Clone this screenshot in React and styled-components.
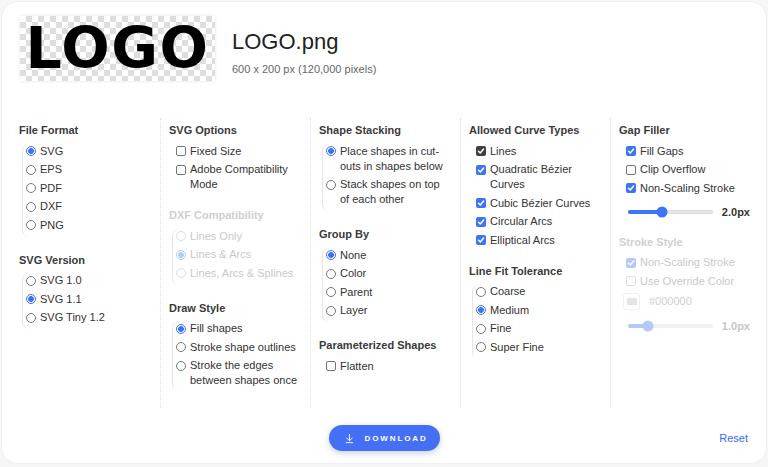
import React from 'react';
import styled, { createGlobalStyle, css } from 'styled-components';
import { ArrowDownToLine } from 'lucide-react';

const blue = '#3d74f6';
const paleBlue = '#b3cafb';

const GlobalStyle = createGlobalStyle`
  body {
    margin: 0;
    background: #f6f6f6;
    font-family: "Liberation Sans", Arial, sans-serif;
    color: #333;
  }
`;

const Card = styled.div`
  box-sizing: border-box;
  margin: 2px;
  width: 764px;
  height: 461px;
  padding: 14px 18px 12px 18px;
  background: #fff;
  border-radius: 16px;
  box-shadow: 0 0 0 1px #f0f0f0;
  display: flex;
  flex-direction: column;
`;

const Header = styled.header`
  display: flex;
  align-items: flex-start;
  gap: 17px;
`;

const Preview = styled.div`
  width: 195px;
  height: 65px;
  display: flex;
  align-items: center;
  justify-content: center;
  background: repeating-conic-gradient(#dedede 0 25%, #fff 0 50%) 0 0 / 12px 12px;
  box-shadow: 0 0 3px rgba(0, 0, 0, 0.12);
`;

const LogoText = styled.span`
  font-family: "DejaVu Sans", sans-serif;
  font-weight: 700;
  font-size: 57px;
  line-height: 1;
  color: #000;
  letter-spacing: 1.5px;
`;

const FileInfo = styled.div`
  padding-top: 13px;
`;

const FileName = styled.h1`
  margin: 0;
  font-size: 22px;
  font-weight: 400;
  line-height: 26px;
  color: #222;
`;

const FileMeta = styled.div`
  margin-top: 8px;
  font-size: 11px;
  color: #666;
`;

const Columns = styled.div`
  display: grid;
  grid-template-columns: repeat(5, 150px);
  margin: 37px 0 0 -10px;
  height: 274px;
`;

const Column = styled.div`
  box-sizing: border-box;
  padding: 5px 10px 0 9px;

  & + & {
    border-left: 1px dotted #dedede;
    padding-left: 8px;
  }
`;

const Section = styled.section`
  margin-bottom: 16px;
`;

const Heading = styled.h3`
  margin: 0 0 6.5px;
  font-size: 11px;
  line-height: 14px;
  font-weight: 700;
  color: ${({ $disabled }) => ($disabled ? '#cfcfcf' : '#3a3a3a')};
`;

const Group = styled.div`
  display: flex;
  flex-direction: column;
  gap: 3.5px;
  margin-left: 3px;
  padding-left: 3px;
  border-left: 1px solid transparent;

  ${({ $boxed }) =>
    $boxed &&
    css`
      border-left-color: #e6e6e6;
      border-radius: 7px;
      padding-bottom: 4px;
    `}
`;

const OptionRow = styled.label`
  display: flex;
  align-items: flex-start;
  gap: 4px;
  font-size: 11px;
  line-height: 15px;
  color: ${({ $disabled }) => ($disabled ? '#c9c9c9' : '#333')};
`;

const Control = styled.span`
  box-sizing: border-box;
  flex: none;
  width: 10px;
  height: 10px;
  margin-top: 2.5px;
  display: flex;
  align-items: center;
  justify-content: center;
  background: #fff;
  border: 1px solid ${({ $disabled }) => ($disabled ? '#dedede' : '#777')};
  border-radius: ${({ $type }) => ($type === 'radio' ? '50%' : '2px')};

  ${({ $type, $checked, $disabled }) =>
    $type === 'radio' &&
    $checked &&
    css`
      border-color: ${$disabled ? paleBlue : blue};
      background: radial-gradient(circle, ${$disabled ? paleBlue : blue} 0 2.6px, #fff 3.2px);
    `}

  ${({ $type, $checked, $disabled, $dark }) =>
    $type === 'checkbox' &&
    $checked &&
    css`
      border-color: transparent;
      background: ${$disabled ? paleBlue : $dark ? '#3f3f3f' : blue};
    `}
`;

const Tick = () => (
  <svg width="8" height="8" viewBox="0 0 8 8">
    <path d="M1.5 4.2 L3.3 6 L6.6 2" fill="none" stroke="#fff" strokeWidth="1.5" strokeLinecap="round" strokeLinejoin="round" />
  </svg>
);

const Option = ({ type = 'radio', checked, disabled, dark, children }) => (
  <OptionRow $disabled={disabled}>
    <Control $type={type} $checked={checked} $disabled={disabled} $dark={dark}>
      {type === 'checkbox' && checked && <Tick />}
    </Control>
    <span>{children}</span>
  </OptionRow>
);

const SliderRow = styled.div`
  display: flex;
  align-items: center;
  gap: 9px;
  margin: 9px 0 0 9px;
  height: 14px;
`;

const Track = styled.div`
  position: relative;
  width: 85px;
  height: 4px;
  border-radius: 2px;
  background: ${({ $disabled }) => ($disabled ? '#f1f1f1' : '#e6e6e6')};
  box-shadow: inset 0 0 0 1px ${({ $disabled }) => ($disabled ? '#f0f0f0' : '#dcdcdc')};
`;

const Fill = styled.div`
  height: 100%;
  border-radius: 2px;
  background: ${({ $disabled }) => ($disabled ? paleBlue : blue)};
`;

const Thumb = styled.div`
  position: absolute;
  top: 50%;
  width: 11px;
  height: 11px;
  border-radius: 50%;
  transform: translate(-50%, -50%);
  background: ${({ $disabled }) => ($disabled ? paleBlue : blue)};
`;

const SliderValue = styled.span`
  font-size: 11px;
  font-weight: 700;
  color: ${({ $disabled }) => ($disabled ? '#c6c6c6' : '#333')};
`;

const Slider = ({ value, label, disabled }) => (
  <SliderRow>
    <Track $disabled={disabled}>
      <Fill $disabled={disabled} style={{ width: `${value}%` }} />
      <Thumb $disabled={disabled} style={{ left: `${value}%` }} />
    </Track>
    <SliderValue $disabled={disabled}>{label}</SliderValue>
  </SliderRow>
);

const ColorRow = styled.div`
  display: flex;
  align-items: center;
  gap: 9px;
  margin: 4px 0 0 4px;
`;

const Swatch = styled.span`
  box-sizing: border-box;
  width: 17px;
  height: 17px;
  display: flex;
  align-items: center;
  justify-content: center;
  border: 1px solid #f0f0f0;
  border-radius: 3px;

  &::after {
    content: '';
    width: 10px;
    height: 7px;
    border-radius: 1px;
    background: #e4e4e4;
  }
`;

const HexValue = styled.span`
  font-size: 11px;
  color: #cfcfcf;
`;

const Footer = styled.footer`
  margin-top: 33px;
  display: grid;
  grid-template-columns: 1fr auto 1fr;
  align-items: center;
`;

const DownloadButton = styled.button`
  grid-column: 2;
  display: flex;
  align-items: center;
  gap: 10px;
  height: 26px;
  width: 111px;
  padding: 0 0 0 15px;
  border: none;
  border-radius: 13px;
  background: #4570f6;
  color: #fff;
  font-family: "Liberation Sans", Arial, sans-serif;
  font-size: 8px;
  font-weight: 700;
  letter-spacing: 1.9px;
  box-shadow: 0 2px 6px rgba(40, 60, 120, 0.25);
`;

const ResetLink = styled.a`
  justify-self: end;
  font-size: 11px;
  color: #3a6cf0;
`;

export default function App() {
  return (
    <>
      <GlobalStyle />
      <Card>
        <Header>
          <Preview>
            <LogoText>LOGO</LogoText>
          </Preview>
          <FileInfo>
            <FileName>LOGO.png</FileName>
            <FileMeta>600 x 200 px (120,000 pixels)</FileMeta>
          </FileInfo>
        </Header>

        <Columns>
          <Column>
            <Section>
              <Heading>File Format</Heading>
              <Group $boxed>
                <Option checked>SVG</Option>
                <Option>EPS</Option>
                <Option>PDF</Option>
                <Option>DXF</Option>
                <Option>PNG</Option>
              </Group>
            </Section>
            <Section>
              <Heading>SVG Version</Heading>
              <Group $boxed>
                <Option>SVG 1.0</Option>
                <Option checked>SVG 1.1</Option>
                <Option>SVG Tiny 1.2</Option>
              </Group>
            </Section>
          </Column>

          <Column>
            <Section>
              <Heading>SVG Options</Heading>
              <Group>
                <Option type="checkbox">Fixed Size</Option>
                <Option type="checkbox">Adobe Compatibility Mode</Option>
              </Group>
            </Section>
            <Section>
              <Heading $disabled>DXF Compatibility</Heading>
              <Group $boxed>
                <Option disabled>Lines Only</Option>
                <Option disabled checked>Lines &amp; Arcs</Option>
                <Option disabled>Lines, Arcs &amp; Splines</Option>
              </Group>
            </Section>
            <Section>
              <Heading>Draw Style</Heading>
              <Group $boxed>
                <Option checked>Fill shapes</Option>
                <Option>Stroke shape outlines</Option>
                <Option>Stroke the edges between shapes once</Option>
              </Group>
            </Section>
          </Column>

          <Column>
            <Section>
              <Heading>Shape Stacking</Heading>
              <Group $boxed>
                <Option checked>Place shapes in cut-outs in shapes below</Option>
                <Option>Stack shapes on top of each other</Option>
              </Group>
            </Section>
            <Section>
              <Heading>Group By</Heading>
              <Group $boxed>
                <Option checked>None</Option>
                <Option>Color</Option>
                <Option>Parent</Option>
                <Option>Layer</Option>
              </Group>
            </Section>
            <Section>
              <Heading>Parameterized Shapes</Heading>
              <Group>
                <Option type="checkbox">Flatten</Option>
              </Group>
            </Section>
          </Column>

          <Column>
            <Section>
              <Heading>Allowed Curve Types</Heading>
              <Group>
                <Option type="checkbox" checked dark>Lines</Option>
                <Option type="checkbox" checked>Quadratic Bézier Curves</Option>
                <Option type="checkbox" checked>Cubic Bézier Curves</Option>
                <Option type="checkbox" checked>Circular Arcs</Option>
                <Option type="checkbox" checked>Elliptical Arcs</Option>
              </Group>
            </Section>
            <Section>
              <Heading>Line Fit Tolerance</Heading>
              <Group $boxed>
                <Option>Coarse</Option>
                <Option checked>Medium</Option>
                <Option>Fine</Option>
                <Option>Super Fine</Option>
              </Group>
            </Section>
          </Column>

          <Column>
            <Section>
              <Heading>Gap Filler</Heading>
              <Group>
                <Option type="checkbox" checked>Fill Gaps</Option>
                <Option type="checkbox">Clip Overflow</Option>
                <Option type="checkbox" checked>Non-Scaling Stroke</Option>
              </Group>
              <Slider value={40} label="2.0px" />
            </Section>
            <Section>
              <Heading $disabled>Stroke Style</Heading>
              <Group>
                <Option type="checkbox" checked disabled>Non-Scaling Stroke</Option>
                <Option type="checkbox" disabled>Use Override Color</Option>
              </Group>
              <ColorRow>
                <Swatch />
                <HexValue>#000000</HexValue>
              </ColorRow>
              <Slider value={23} label="1.0px" disabled />
            </Section>
          </Column>
        </Columns>

        <Footer>
          <DownloadButton>
            <ArrowDownToLine size={11} strokeWidth={2} />
            DOWNLOAD
          </DownloadButton>
          <ResetLink>Reset</ResetLink>
        </Footer>
      </Card>
    </>
  );
}
